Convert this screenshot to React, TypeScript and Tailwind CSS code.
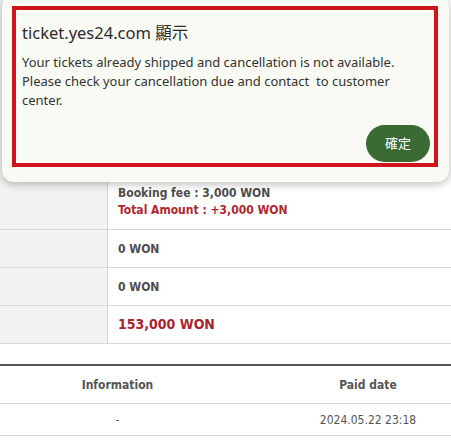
import React from "react";

const pageFont = { fontFamily: '"DejaVu Sans Condensed", "DejaVu Sans", Tahoma, sans-serif', fontStretch: "semi-condensed" } as React.CSSProperties;
const dlgFont = { fontFamily: '"Noto Sans", "Noto Sans CJK TC", sans-serif' } as React.CSSProperties;

export default function App() {
  return (
    <div className="relative w-[451px] h-[440px] overflow-hidden bg-white" style={pageFont}>
      {/* page content */}
      <div className="flex flex-col text-[12px] text-[#4d4d4d]">
        <div className="grid grid-cols-[108px_1fr] h-[230px] border-b border-[#d6d6d6]">
          <div className="bg-[#f2f2f2] border-r border-[#d6d6d6]" />
          <div className="flex flex-col justify-end pb-[10px] pl-[10px] leading-[17px] font-bold">
            <div>Booking fee : 3,000 WON</div>
            <div className="text-[#b0272f]">Total Amount : +3,000 WON</div>
          </div>
        </div>
        <div className="grid grid-cols-[108px_1fr] h-[38px] border-b border-[#d6d6d6]">
          <div className="bg-[#f2f2f2] border-r border-[#d6d6d6]" />
          <div className="flex items-center pl-[10px] font-bold">0 WON</div>
        </div>
        <div className="grid grid-cols-[108px_1fr] h-[38px] border-b border-[#d6d6d6]">
          <div className="bg-[#f2f2f2] border-r border-[#d6d6d6]" />
          <div className="flex items-center pl-[10px] font-bold">0 WON</div>
        </div>
        <div className="grid grid-cols-[108px_1fr] h-[38px] border-b border-[#d6d6d6]">
          <div className="bg-[#f2f2f2] border-r border-[#d6d6d6]" />
          <div className="flex items-center pl-[10px] font-bold text-[14px] text-[#a82530]">153,000 WON</div>
        </div>
        <div className="h-[20px]" />
        <div className="w-[501px] border-t-2 border-[#555555]">
          <div className="grid grid-cols-[235px_266px] h-[38px] border-b border-[#d6d6d6] font-bold text-[#555]">
            <div className="flex items-center justify-center">Information</div>
            <div className="flex items-center justify-center">Paid date</div>
          </div>
          <div className="grid grid-cols-[235px_266px] h-[32px] border-b border-[#d6d6d6] text-[#555]">
            <div className="flex items-center justify-center">-</div>
            <div className="flex items-center justify-center">2024.05.22 23:18</div>
          </div>
        </div>
      </div>

      {/* dialog */}
      <div
        className="absolute left-[2px] top-[-6px] w-[447px] h-[188px] rounded-[12px] bg-[#f8faf3] shadow-[0_2px_8px_rgba(0,0,0,0.28)]"
        style={dlgFont}
      >
        <div className="pl-[20px] pt-[28px] text-[16.5px] leading-[22px] text-[#2b2b2b]">ticket.yes24.com 顯示</div>
        <div className="pl-[20px] pt-[9px] pr-[40px] text-[13px] leading-[19px] text-[#333]">
          <div>Your tickets already shipped and cancellation is not available.</div>
          <div>Please check your cancellation due and contact&nbsp; to customer</div>
          <div>center.</div>
        </div>
        <div className="absolute left-[364px] top-[131px] w-[64px] h-[37px] rounded-full bg-[#3b6a34] flex items-center justify-center text-white text-[13px]">
          確定
        </div>
      </div>
      {/* red annotation box */}
      <div className="absolute left-[12px] top-[6px] w-[426px] h-[161px] border-[4px] border-[#d0141c]" />
    </div>
  );
}
